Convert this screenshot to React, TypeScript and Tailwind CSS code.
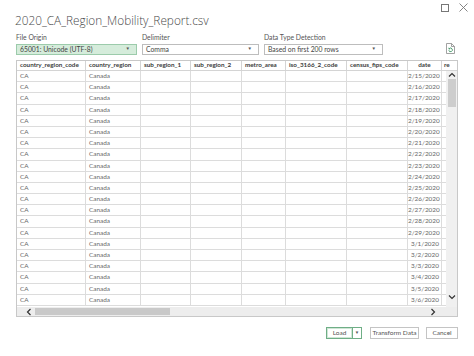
const dates = [
  "2/15/2020", "2/16/2020", "2/17/2020", "2/18/2020", "2/19/2020", "2/20/2020", "2/21/2020",
  "2/22/2020", "2/23/2020", "2/24/2020", "2/25/2020", "2/26/2020", "2/27/2020", "2/28/2020",
  "2/29/2020", "3/1/2020", "3/2/2020", "3/3/2020", "3/4/2020", "3/5/2020", "3/6/2020",
];

const cols = [
  { name: "country_region_code", w: "w-[69px]", align: "justify-start pl-[3px]" },
  { name: "country_region", w: "w-[55px]", align: "justify-start pl-[3px]" },
  { name: "sub_region_1", w: "w-[50px]", align: "justify-start pl-[3px]" },
  { name: "sub_region_2", w: "w-[51px]", align: "justify-start pl-[3px]" },
  { name: "metro_area", w: "w-[44px]", align: "justify-start pl-[3px]" },
  { name: "iso_3166_2_code", w: "w-[61px]", align: "justify-start pl-[3px]" },
  { name: "census_fips_code", w: "w-[61px]", align: "justify-start pl-[3px]" },
  { name: "date", w: "w-[34px]", align: "justify-center" },
];

function Select({ label, value, width, active }: { label: string; value: string; width: string; active?: boolean }) {
  return (
    <div className={`flex flex-col ${width}`}>
      <span className="text-[6.8px] leading-[9px] text-[#555] h-[10px] whitespace-nowrap">{label}</span>
      <div
        className={`mt-[1px] h-[11px] flex items-center justify-between px-[3px] border ${
          active ? "bg-[#d5ecdb] border-[#9ccbab]" : "bg-white border-[#bdbdbd]"
        }`}
      >
        <span className="text-[6.8px] text-[#444] leading-none whitespace-nowrap">{value}</span>
        <span className="text-[4.5px] text-[#555] pr-[3px]">▼</span>
      </div>
    </div>
  );
}

export default function App() {
  return (
    <div
      className="relative w-[474px] h-[356px] bg-white overflow-hidden flex flex-col"
      style={{ fontFamily: 'Lato, "Open Sans", sans-serif' }}
    >
      {/* window controls */}
      <div className="absolute top-[3px] right-[6px] flex items-center gap-[10px] text-[#777]">
        <div className="w-[8px] h-[8px] border border-[#777]" />
        <svg width="9" height="9" viewBox="0 0 9 9" stroke="#777" strokeWidth="0.9">
          <line x1="0.5" y1="0.5" x2="8.5" y2="8.5" />
          <line x1="8.5" y1="0.5" x2="0.5" y2="8.5" />
        </svg>
      </div>

      <div
        className="pl-[15px] pt-[12px] text-[11.8px] leading-[16px] font-light text-[#4a4a4a]"
        style={{ fontFamily: '"Open Sans", sans-serif' }}
      >
        2020_CA_Region_Mobility_Report.csv
      </div>

      <div className="flex items-end pl-[16px] pr-[16px] mt-[5px] gap-[5px]">
        <Select label="File Origin" value="65001: Unicode (UTF-8)" width="w-[121px]" active />
        <Select label="Delimiter" value="Comma" width="w-[117px]" />
        <Select label="Data Type Detection" value="Based on first 200 rows" width="w-[119px]" />
        <div className="ml-auto mb-[1px] mr-[3px]">
          <svg width="9" height="11" viewBox="0 0 9 11" fill="none">
            <path d="M0.5 0.5 H5.5 L8.5 3.5 V10.5 H0.5 Z" stroke="#8a8a8a" strokeWidth="0.8" fill="white" />
            <path d="M5.5 0.5 V3.5 H8.5" stroke="#8a8a8a" strokeWidth="0.8" />
            <path d="M2.8 7.2 A1.8 1.8 0 1 0 3.3 5.6" stroke="#2e8b57" strokeWidth="0.8" />
            <path d="M2.2 5.2 L3.6 5.4 L3.3 6.6" stroke="#2e8b57" strokeWidth="0.7" />
          </svg>
        </div>
      </div>

      {/* table */}
      <div className="mx-[16px] mt-[5px] w-[442px] h-[257px] border border-[#c8c8c8] flex flex-col overflow-hidden">
        <div className="flex h-[10px] shrink-0 border-b border-[#d4d4d4]">
          {cols.map((c) => (
            <div
              key={c.name}
              className={`${c.w} shrink-0 border-r border-[#d4d4d4] flex items-center ${c.align} text-[6.3px] font-bold text-[#3a3a3a] leading-none whitespace-nowrap overflow-hidden`}
            >
              {c.name}
            </div>
          ))}
          <div className="flex-1 flex items-center pl-[2px] text-[6.3px] font-bold text-[#3a3a3a] leading-none">re</div>
        </div>

        <div className="flex flex-1 min-h-0">
          <div className="flex-1 min-w-0 overflow-hidden">
            {dates.map((d) => (
              <div key={d} className="flex h-[11.2px] border-b border-[#dcdcdc]">
                <div className="w-[69px] shrink-0 border-r border-[#dcdcdc] pl-[3px] text-[6.4px] text-[#666] leading-[10.5px]">CA</div>
                <div className="w-[55px] shrink-0 border-r border-[#dcdcdc] pl-[3px] text-[6.4px] text-[#666] leading-[10.5px]">Canada</div>
                <div className="w-[50px] shrink-0 border-r border-[#dcdcdc]" />
                <div className="w-[51px] shrink-0 border-r border-[#dcdcdc]" />
                <div className="w-[44px] shrink-0 border-r border-[#dcdcdc]" />
                <div className="w-[61px] shrink-0 border-r border-[#dcdcdc]" />
                <div className="w-[61px] shrink-0 border-r border-[#dcdcdc]" />
                <div className="w-[34px] shrink-0 border-r border-[#dcdcdc] pr-[2px] text-right text-[6.4px] text-[#666] leading-[10.5px] whitespace-nowrap">{d}</div>
                <div className="flex-1" />
              </div>
            ))}
          </div>
          <div className="w-[11px] shrink-0 bg-[#f0f0f0] flex flex-col items-center">
            <svg width="8" height="6" viewBox="0 0 8 6" className="mt-[1px]">
              <path d="M1 4.5 L4 1.5 L7 4.5" stroke="#333" strokeWidth="1.2" fill="none" />
            </svg>
            <div className="mt-[1px] w-[8px] h-[28px] bg-[#cdcdcd]" />
            <div className="flex-1" />
            <svg width="8" height="6" viewBox="0 0 8 6" className="mb-[7px]">
              <path d="M1 1.5 L4 4.5 L7 1.5" stroke="#333" strokeWidth="1.2" fill="none" />
            </svg>
          </div>
        </div>

        <div className="flex items-center h-[9px] shrink-0 bg-[#ededed]">
          <div className="w-[18px] flex justify-center pl-[6px]">
            <svg width="6" height="8" viewBox="0 0 6 8">
              <path d="M4.5 1 L1.5 4 L4.5 7" stroke="#333" strokeWidth="1.2" fill="none" />
            </svg>
          </div>
          <div className="w-[135px] h-[7px] bg-[#c9c9c9]" />
          <div className="flex-1" />
          <div className="w-[12px] flex justify-start mr-[15px]">
            <svg width="6" height="8" viewBox="0 0 6 8">
              <path d="M1.5 1 L4.5 4 L1.5 7" stroke="#333" strokeWidth="1.2" fill="none" />
            </svg>
          </div>
        </div>
      </div>

      {/* buttons */}
      <div className="flex justify-end items-center mt-[10px] pr-[16px] gap-[7px]">
        <div className="flex h-[12px]">
          <div className="w-[27px] border border-[#6fae86] flex items-center justify-center text-[6.5px] text-[#555] shadow-[inset_0_0_0_1px_#cfe6d6]">Load</div>
          <div className="w-[9px] border border-l-0 border-[#6fae86] flex items-center justify-center text-[4.5px] text-[#555]">▼</div>
        </div>
        <div className="w-[49px] h-[12px] border border-[#c4c4c4] flex items-center justify-center text-[6.5px] text-[#555] ml-[1px] whitespace-nowrap">Transform Data</div>
        <div className="w-[32px] h-[12px] border border-[#c4c4c4] flex items-center justify-center text-[6.5px] text-[#555]">Cancel</div>
      </div>
    </div>
  );
}
